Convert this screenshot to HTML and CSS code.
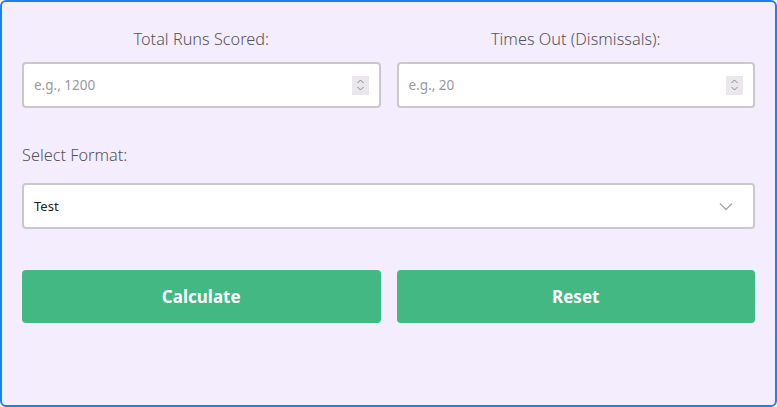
FILE: index.html
```html
<!DOCTYPE html>
<html>
<head>
<meta charset="utf-8">
<link rel="stylesheet" href="styles.css">
</head>
<body>
<div class="card">
  <div class="row">
    <div class="field">
      <label class="label-center">Total Runs Scored:</label>
      <div class="box">
        <input class="inp" type="text" placeholder="e.g., 1200">
        <span class="spin">
          <svg width="9" height="14" viewBox="0 0 9 14"><path d="M1.5 5 L4.5 2 L7.5 5" fill="none" stroke="#8a8890" stroke-width="1"/><path d="M1.5 9 L4.5 12 L7.5 9" fill="none" stroke="#8a8890" stroke-width="1"/></svg>
        </span>
      </div>
    </div>
    <div class="field">
      <label class="label-center">Times Out (Dismissals):</label>
      <div class="box">
        <input class="inp" type="text" placeholder="e.g., 20">
        <span class="spin">
          <svg width="9" height="14" viewBox="0 0 9 14"><path d="M1.5 5 L4.5 2 L7.5 5" fill="none" stroke="#8a8890" stroke-width="1"/><path d="M1.5 9 L4.5 12 L7.5 9" fill="none" stroke="#8a8890" stroke-width="1"/></svg>
        </span>
      </div>
    </div>
  </div>
  <label class="label-left">Select Format:</label>
  <div class="box select">
    <span class="sel-text">Test</span>
    <svg class="chev" width="14" height="9" viewBox="0 0 14 9"><path d="M1 1.5 L7 7.5 L13 1.5" fill="none" stroke="#a9a7ad" stroke-width="1.4"/></svg>
  </div>
  <div class="row buttons">
    <button class="btn">Calculate</button>
    <button class="btn">Reset</button>
  </div>
</div>
</body>
</html>
```
FILE: styles.css
```css
html, body {
  margin: 0;
  padding: 0;
  background: #ffffff;
}
body {
  font-family: "Noto Sans", "Open Sans", sans-serif;
}
.card {
  width: 777px;
  height: 407px;
  box-sizing: border-box;
  border: 2px solid #1e80e8;
  border-radius: 6px;
  background: #f4edfd;
  padding: 20px;
}
.row {
  display: grid;
  grid-template-columns: 1fr 1fr;
  column-gap: 16px;
}
.field {
  display: flex;
  flex-direction: column;
}
.label-center {
  display: block;
  text-align: center;
  font-size: 16.3px;
  font-weight: 300;
  color: #55535a;
  line-height: 24px;
  padding-top: 5px;
  margin-bottom: 11px;
}
.box {
  height: 46px;
  box-sizing: border-box;
  background: #ffffff;
  border: 2px solid #cac8cd;
  border-radius: 4px;
  display: flex;
  align-items: center;
  padding: 0 10px 0 10px;
}
.inp {
  flex: 1;
  border: none;
  outline: none;
  background: transparent;
  font-family: inherit;
  font-size: 13.5px;
  color: #333;
  padding: 0;
  min-width: 0;
}
.inp::placeholder {
  color: #9a989e;
  opacity: 1;
}
.spin {
  width: 17px;
  height: 19px;
  background: #e9e7ec;
  display: flex;
  align-items: center;
  justify-content: center;
}
.label-left {
  display: block;
  font-size: 16.3px;
  font-weight: 300;
  color: #55535a;
  line-height: 24px;
  margin-top: 35px;
  margin-bottom: 16px;
}
.select {
  justify-content: space-between;
  padding: 0 20px 0 10px;
}
.sel-text {
  font-size: 13px;
  color: #222;
}
.buttons {
  margin-top: 41px;
}
.btn {
  height: 53px;
  border: none;
  border-radius: 4px;
  background: #43b883;
  color: #ffffff;
  font-family: inherit;
  font-weight: 700;
  font-size: 17px;
  padding: 0;
}
```
